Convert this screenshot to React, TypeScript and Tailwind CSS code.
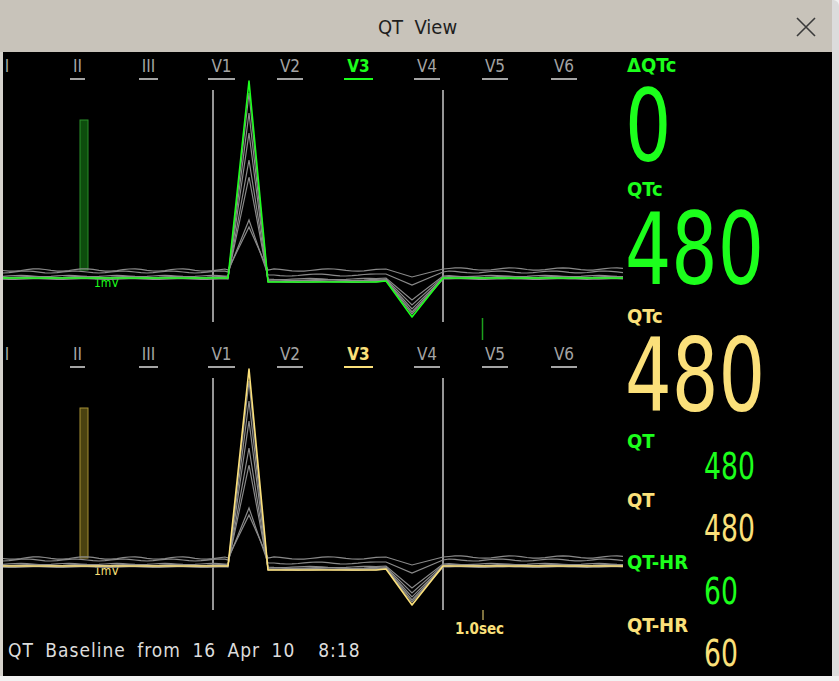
import React from 'react';

const LEADS: { name: string; w: string }[] = [
  { name: 'I', w: 'w-[70px]' },
  { name: 'II', w: 'w-[71px]' },
  { name: 'III', w: 'w-[71px]' },
  { name: 'V1', w: 'w-[75px]' },
  { name: 'V2', w: 'w-[62px]' },
  { name: 'V3', w: 'w-[75px]' },
  { name: 'V4', w: 'w-[62px]' },
  { name: 'V5', w: 'w-[74px]' },
  { name: 'V6', w: 'w-[64px]' },
];

const FONT = "font-['DejaVu_Sans_Condensed','DejaVu_Sans',sans-serif]";

interface TraceSpec {
  base0: number;
  base1: number;
  base2: number;
  peak: number;
  trough: number;
  wig: number;
  ph: number;
}

// builds one beat, coordinates are local to the panel svg
function beat(t: TraceSpec): string {
  const pts: string[] = [];
  for (let x = 3; x <= 228; x += 6) {
    pts.push(`${x},${(t.base0 + t.wig * Math.sin(x * 0.13 + t.ph)).toFixed(1)}`);
  }
  pts.push(`228,${t.base0}`);
  pts.push(`249,${t.peak}`);
  pts.push(`268,${t.base1}`);
  for (let x = 274; x <= 380; x += 6) {
    pts.push(`${x},${(t.base1 + t.wig * Math.sin(x * 0.11 + t.ph)).toFixed(1)}`);
  }
  pts.push(`386,${t.base1 - 1}`);
  pts.push(`412,${t.trough}`);
  pts.push(`443,${t.base2}`);
  for (let x = 449; x <= 623; x += 6) {
    pts.push(`${x},${(t.base2 + t.wig * Math.sin(x * 0.12 + t.ph)).toFixed(1)}`);
  }
  return 'M' + pts.join(' L');
}

const GRAY: TraceSpec[] = [
  { base0: 190, base1: 190, base2: 189, peak: 147, trough: 197, wig: 1.2, ph: 0 },
  { base0: 192, base1: 195, base2: 192, peak: 140, trough: 205, wig: 1, ph: 1.3 },
  { base0: 196, base1: 199, base2: 196, peak: 97, trough: 220, wig: 0.6, ph: 2.1 },
  { base0: 197, base1: 200, base2: 197, peak: 80, trough: 225, wig: 0.5, ph: 0.7 },
  { base0: 198, base1: 201, base2: 198, peak: 53, trough: 229, wig: 0.4, ph: 2.8 },
  { base0: 198, base1: 201, base2: 198, peak: 33, trough: 232, wig: 0.4, ph: 1.9 },
  { base0: 199, base1: 202, base2: 199, peak: 13, trough: 234, wig: 0.3, ph: 0.2 },
];

const MAIN: TraceSpec = { base0: 198, base1: 202, base2: 198, peak: 1, trough: 237, wig: 0, ph: 0 };

function LeadRow({ active, color }: { active: string; color: string }) {
  return (
    <div className="flex h-[28px] ml-[-31px] shrink-0">
      {LEADS.map((l) => {
        const on = l.name === active;
        return (
          <div key={l.name} className={`${l.w} shrink-0 flex justify-center pt-[7px]`}>
            <span
              className={`inline-block px-[3px] pb-[4px] text-[17px] leading-[14px] border-b-2 ${
                l.name === 'I'
                  ? 'border-transparent text-[#a4a4a4]'
                  : on
                  ? 'font-bold'
                  : 'border-[#a4a4a4] text-[#a4a4a4]'
              }`}
              style={on ? { color, borderColor: color } : undefined}
            >
              {l.name}
            </span>
          </div>
        );
      })}
    </div>
  );
}

function Waves({
  color,
  pulseFill,
  pulseStroke,
  height,
  tick,
  children,
}: {
  color: string;
  pulseFill: string;
  pulseStroke: string;
  height: number;
  tick?: React.ReactNode;
  children?: React.ReactNode;
}) {
  return (
    <svg width={620} height={height} viewBox={`3 0 620 ${height}`} className="block overflow-visible shrink-0">
      <rect x={80} y={40} width={8} height={150} fill={pulseFill} stroke={pulseStroke} strokeWidth={1} />
      <text x={94} y={207} fontSize={12} fill={color} fontFamily="DejaVu Sans Condensed, sans-serif">
        1mV
      </text>
      <line x1={213} y1={10} x2={213} y2={242} stroke="#c8c8c8" strokeWidth={1.5} />
      <line x1={443} y1={10} x2={443} y2={242} stroke="#c8c8c8" strokeWidth={1.5} />
      {GRAY.map((g, i) => (
        <path key={i} d={beat(g)} fill="none" stroke="#8a8a8a" strokeWidth={1.2} />
      ))}
      <path d={beat(MAIN)} fill="none" stroke={color} strokeWidth={1.6} strokeLinejoin="round" />
      {tick}
      {children}
    </svg>
  );
}

export default function App() {
  const green = '#1cff1c';
  const yellow = '#fbe07a';
  return (
    <div className={`w-[839px] h-[681px] bg-[#f2f2f2] overflow-hidden ${FONT}`}>
      <div className="w-[839px] h-[676px] flex flex-col bg-[#d6d3cd] rounded-tr-[6px] border-r-[7px] border-[#dcdcdc]">
        {/* title bar */}
        <div className="h-[52px] shrink-0 bg-[#c8c3ba] flex items-center relative pl-[3px]">
          <div className="flex-1 text-center text-[20px] text-[#1e1e1e] whitespace-pre pt-[2px]">QT  View</div>
          <div className="absolute left-[795px] top-[16px]">
            <svg width={22} height={22} viewBox="0 0 22 22">
              <path d="M2 2 L20 20 M20 2 L2 20" stroke="#3a3a3a" strokeWidth={1.6} />
            </svg>
          </div>
        </div>

        {/* monitor area */}
        <div className="flex-1 ml-[3px] bg-black flex overflow-hidden">
          <div className="w-[620px] shrink-0 flex flex-col overflow-hidden">
            <LeadRow active="V3" color={green} />
            <Waves
              color={green}
              pulseFill="#0d4d0d"
              pulseStroke="#2a8f2a"
              height={260}
              tick={<line x1={482.5} y1={238} x2={482.5} y2={260} stroke="#1ca01c" strokeWidth={1.5} />}
            />
            <LeadRow active="V3" color={yellow} />
            <Waves
              color={yellow}
              pulseFill="#4a4210"
              pulseStroke="#a58f34"
              height={270}
              tick={<line x1={483} y1={242} x2={483} y2={252} stroke={yellow} strokeWidth={1} />}
            >
              <text x={455} y={266} fontSize={15} fontWeight="bold" fill={yellow} fontFamily="DejaVu Sans Condensed, sans-serif">
                1.0sec
              </text>
            </Waves>
            <div className="pt-[3px] pl-[5px] text-[19px] leading-[19px] text-[#dcdcdc] whitespace-pre tracking-[1px] [word-spacing:5px]">
              QT Baseline from 16 Apr 10  8:18
            </div>
          </div>

          {/* numerics */}
          <div className="flex-1 flex flex-col pl-[4px] pt-[3px] font-bold">
            <div className="h-[22px] text-[20px] leading-[20px] text-[#1cff1c]">ΔQTc</div>
            <div className="h-[102px] text-[100px] leading-[100px] font-normal text-[#1cff1c] ml-[-2px] origin-left scale-x-[0.81]">0</div>
            <div className="h-[21px] text-[20px] leading-[20px] text-[#1cff1c]">QTc</div>
            <div className="h-[106px] text-[100px] leading-[100px] font-normal text-[#1cff1c] ml-[-2px] origin-left scale-x-[0.81]">480</div>
            <div className="h-[19px] text-[20px] leading-[20px] text-[#fbe07a]">QTc</div>
            <div className="h-[106px] text-[102px] leading-[102px] font-normal text-[#fbe07a] ml-[-2px] origin-left scale-x-[0.8]">480</div>
            <div className="h-[17px] text-[20px] leading-[20px] text-[#1cff1c]">QT</div>
            <div className="h-[42px] text-[37px] leading-[37px] font-normal text-[#1cff1c] ml-[77px] origin-left scale-x-[0.8]">480</div>
            <div className="h-[20px] text-[20px] leading-[20px] text-[#fbe07a]">QT</div>
            <div className="h-[42px] text-[37px] leading-[37px] font-normal text-[#fbe07a] ml-[77px] origin-left scale-x-[0.8]">480</div>
            <div className="h-[21px] text-[20px] leading-[20px] text-[#1cff1c]">QT-HR</div>
            <div className="h-[42px] text-[37px] leading-[37px] font-normal text-[#1cff1c] ml-[77px] origin-left scale-x-[0.8]">60</div>
            <div className="h-[20px] text-[20px] leading-[20px] text-[#fbe07a]">QT-HR</div>
            <div className="h-[40px] text-[37px] leading-[37px] font-normal text-[#fbe07a] ml-[77px] origin-left scale-x-[0.8]">60</div>
          </div>
        </div>
      </div>
    </div>
  );
}
